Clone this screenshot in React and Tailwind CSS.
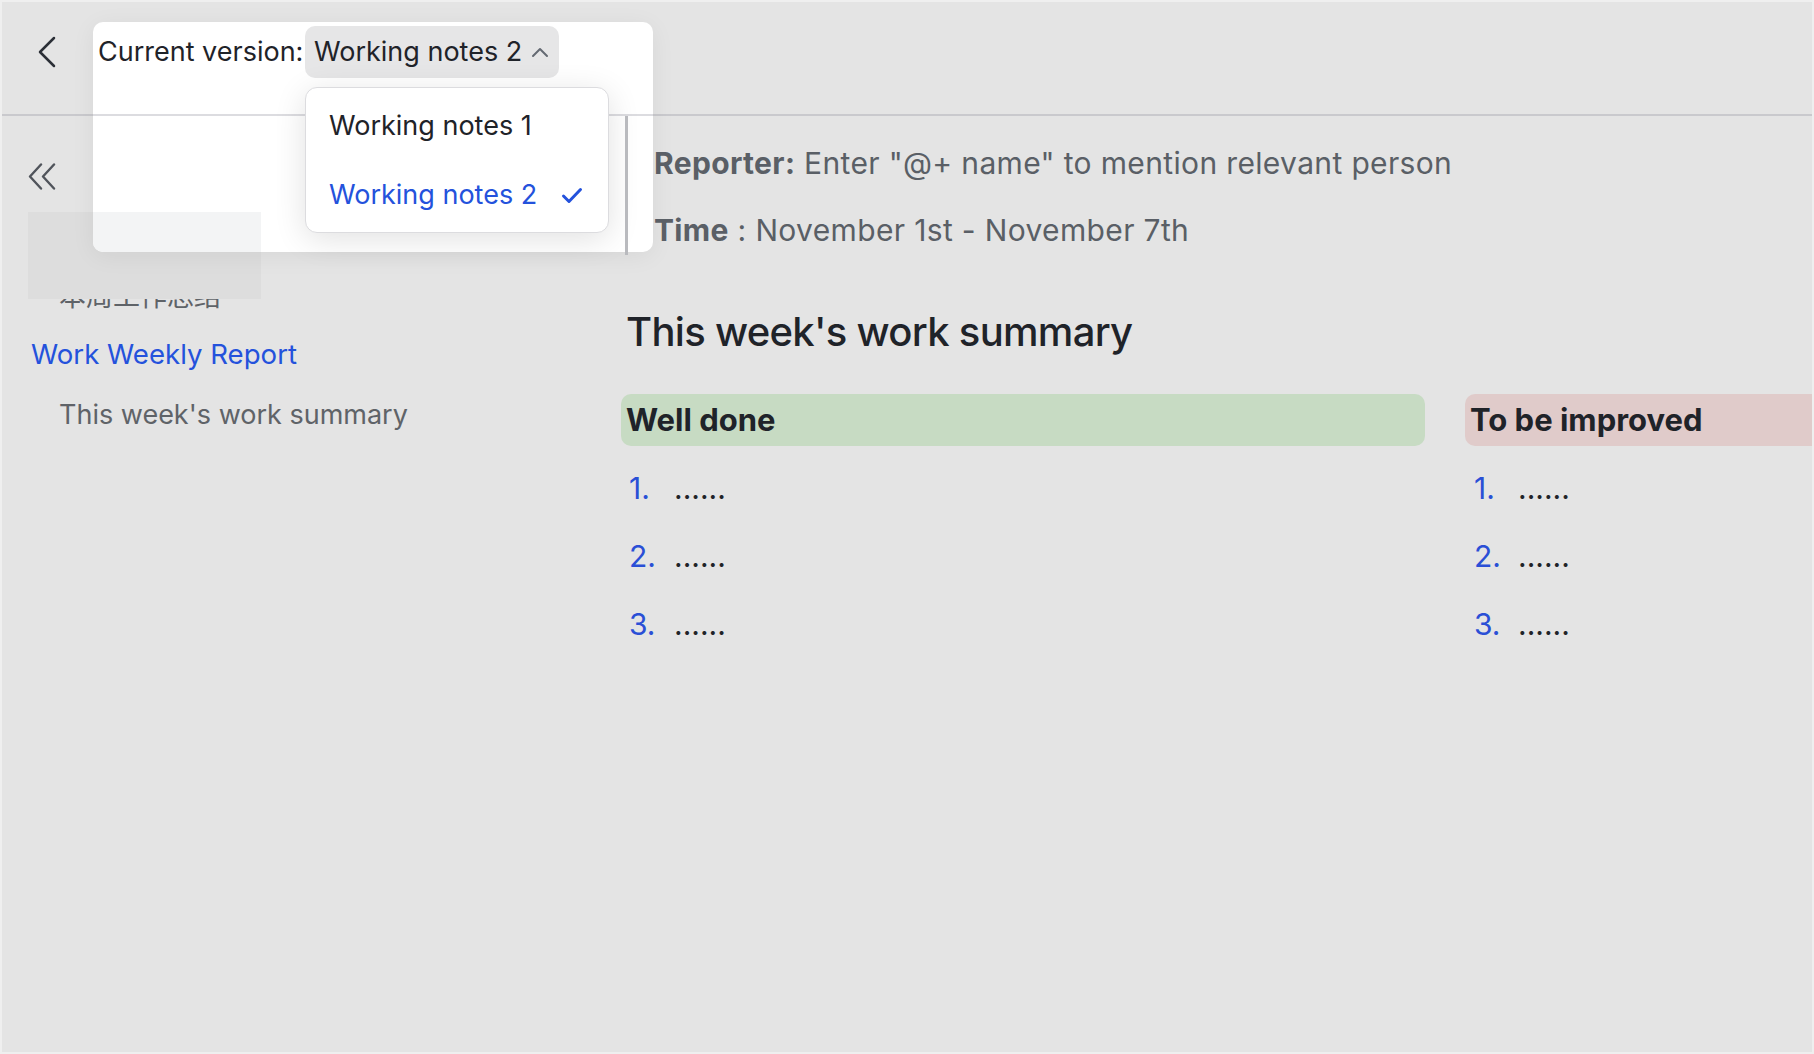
export default function App() {
  return (
    <div className="relative w-[1814px] h-[1054px] overflow-hidden bg-[#e4e4e4] border-2 border-[#efefef] font-['Inter',sans-serif] text-[#1f2329]">
      {/* header */}
      <header className="h-[114px] border-b-2 border-[#c9c9cd] flex items-start">
        <button className="ml-[35px] mt-[34px] text-[#2b2f36]" aria-label="Back">
          <svg width="20" height="32" viewBox="0 0 20 32" fill="none" stroke="currentColor" strokeWidth="2.5" strokeLinecap="round" strokeLinejoin="round">
            <path d="M17 2 L3 16 L17 30" />
          </svg>
        </button>
      </header>

      {/* body */}
      <div className="flex">
        <aside className="relative w-[619px] shrink-0">
          <div className="ml-[26px] mt-[47px] text-[#50545b]">
            <svg width="30" height="27" viewBox="0 0 30 27" fill="none" stroke="currentColor" strokeWidth="2.4" strokeLinecap="round" strokeLinejoin="round">
              <path d="M13 1.5 L2 13.5 L13 25.5" />
              <path d="M26 1.5 L15 13.5 L26 25.5" />
            </svg>
          </div>
          <div className="mt-[75px]">
            <div className="h-[60px] flex items-center pl-[57px] text-[27px] text-[#5f6368] font-['Noto_Sans_CJK_SC',sans-serif]">本周工作总结</div>
            <div className="h-[60px] flex items-center pl-[29px] text-[27.6px] text-[#2452dc]">Work Weekly Report</div>
            <div className="h-[60px] flex items-center pl-[57px] text-[27px] text-[#5f6368]">This week's work summary</div>
          </div>
          <div className="absolute left-[26px] top-[96px] w-[233px] h-[87px] bg-[#dddddd] z-10" />
        </aside>

        <main className="flex-1 overflow-hidden">
          <div className="relative z-30 ml-[4px] border-l-[3px] border-[#b9babe] pl-[26px] pt-[27px] pb-[5px] text-[30px] leading-[40px] tracking-[0.35px] text-[#5a5f66]">
            <div className="h-[40px] whitespace-nowrap">
              <span className="font-bold">Reporter:</span> Enter "@+ name" to mention relevant person
            </div>
            <div className="h-[40px] mt-[27px] whitespace-nowrap">
              <span className="font-bold">Time</span> : November 1st - November 7th
            </div>
          </div>

          <h1 className="mt-[51px] ml-[5px] text-[40px] leading-[52px] font-medium tracking-[-0.7px] text-[#1f2329] whitespace-nowrap">This week's work summary</h1>

          <div className="mt-[36px] flex gap-[40px] w-[1700px]">
            <div className="w-[804px] shrink-0">
              <div className="h-[52px] rounded-[10px] bg-[#c7dbc3] pl-[5px] flex items-center text-[31px] font-bold text-[#1f2329]">Well done</div>
              <ol className="mt-[8px]">
                {["1.", "2.", "3."].map((n) => (
                  <li key={n} className="h-[68px] flex items-center pl-[8px] text-[30px]">
                    <span className="w-[45px] text-[#2a4fd6]">{n}</span>
                    <span className="text-[#1f2329]">......</span>
                  </li>
                ))}
              </ol>
            </div>
            <div className="w-[804px] shrink-0">
              <div className="h-[52px] rounded-[10px] bg-[#e0cbca] pl-[5px] flex items-center text-[31px] font-bold text-[#1f2329]">To be improved</div>
              <ol className="mt-[8px]">
                {["1.", "2.", "3."].map((n) => (
                  <li key={n} className="h-[68px] flex items-center pl-[9px] text-[30px]">
                    <span className="w-[44px] text-[#2a4fd6]">{n}</span>
                    <span className="text-[#1f2329]">......</span>
                  </li>
                ))}
              </ol>
            </div>
          </div>
        </main>
      </div>

      {/* version popover */}
      <div className="absolute left-[91px] top-[20px] w-[560px] h-[230px] z-20 rounded-[10px] bg-white shadow-[0_4px_24px_rgba(0,0,0,0.06)]">
        <div className="absolute left-0 right-0 top-[92px] h-[2px] bg-[#dcdce0]" />
        <div className="absolute left-0 top-[190px] w-[168px] h-[40px] bg-[#f3f4f5] rounded-bl-[10px]" />
        <div className="relative flex items-center pl-[5px] pt-[4px]">
          <span className="w-[207px] whitespace-nowrap text-[27px] text-[#1f2329]">Current version:</span>
          <button className="h-[52px] w-[254px] rounded-[10px] bg-[#e6e6e7] pl-[9px] pr-[10px] flex items-center text-[27px] text-[#1f2329]">
            <span className="whitespace-nowrap">Working notes 2</span>
            <svg className="ml-auto text-[#646a73]" width="18" height="12" viewBox="0 0 18 12" fill="none" stroke="currentColor" strokeWidth="2" strokeLinecap="round" strokeLinejoin="round">
              <path d="M2 10 L9 3 L16 10" />
            </svg>
          </button>
        </div>
        <div className="absolute left-[212px] top-[65px] w-[304px] h-[146px] rounded-[12px] border border-[#dcdcdf] bg-white shadow-[0_6px_32px_rgba(0,0,0,0.12)] py-[4px]">
          <div className="h-[69px] px-[23px] flex items-center text-[27px] text-[#1f2329] whitespace-nowrap">Working notes 1</div>
          <div className="h-[69px] pl-[23px] pr-[25px] flex items-center text-[27px] text-[#2452dc] whitespace-nowrap">
            <span>Working notes 2</span>
            <svg className="ml-auto" width="22" height="17" viewBox="0 0 22 17" fill="none" stroke="currentColor" strokeWidth="3" strokeLinecap="round" strokeLinejoin="round">
              <path d="M2.5 9 L8 14.5 L19.5 2.5" />
            </svg>
          </div>
        </div>
      </div>
    </div>
  );
}
